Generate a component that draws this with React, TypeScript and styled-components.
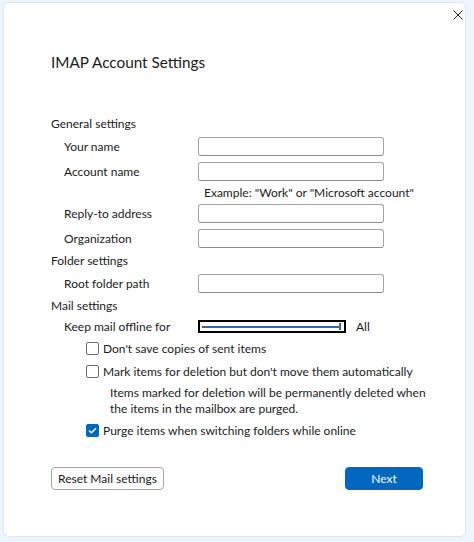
import React from "react";
import styled, { createGlobalStyle } from "styled-components";

const GlobalStyle = createGlobalStyle`
  html, body {
    margin: 0;
    padding: 0;
    background: #edf4fb;
  }
  body {
    font-family: Lato, "Open Sans", sans-serif;
    color: #1b1b1b;
  }
`;

const generalFields = [
  { label: "Your name" },
  { label: "Account name", hint: 'Example: "Work" or "Microsoft account"' },
  { label: "Reply-to address" },
  { label: "Organization" },
];

const App = () => {
  return (
    <>
      <GlobalStyle />
      <StyledWindow>
        <TitleBar>
          <CloseButton aria-label="Close">
            <svg width="10" height="10" viewBox="0 0 10 10">
              <path d="M0.5 0.5 L9.5 9.5 M9.5 0.5 L0.5 9.5" stroke="#1b1b1b" strokeWidth="1" />
            </svg>
          </CloseButton>
        </TitleBar>

        <Body>
          <Title>IMAP Account Settings</Title>

          {/* General settings */}
          <SectionTitle>General settings</SectionTitle>
          {generalFields.map((f) => (
            <React.Fragment key={f.label}>
              <FieldRow>
                <Label>{f.label}</Label>
                <TextInput />
              </FieldRow>
              {f.hint && <Hint>{f.hint}</Hint>}
            </React.Fragment>
          ))}

          {/* Folder settings */}
          <SectionTitle>Folder settings</SectionTitle>
          <FieldRow>
            <Label>Root folder path</Label>
            <TextInput />
          </FieldRow>

          {/* Mail settings */}
          <SectionTitle>Mail settings</SectionTitle>
          <SliderRow>
            <Label>Keep mail offline for</Label>
            <Slider>
              <SliderTrack />
              <SliderThumb />
            </Slider>
            <SliderValue>All</SliderValue>
          </SliderRow>

          <CheckRow>
            <CheckBox />
            <span>Don't save copies of sent items</span>
          </CheckRow>
          <CheckRow>
            <CheckBox />
            <span>Mark items for deletion but don't move them automatically</span>
          </CheckRow>
          <Description>
            Items marked for deletion will be permanently deleted when
            <br />
            the items in the mailbox are purged.
          </Description>
          <CheckRow>
            <CheckBox $checked>
              <svg width="9" height="7" viewBox="0 0 9 7">
                <path d="M1 3.6 L3.4 5.8 L8 1.2" fill="none" stroke="#fff" strokeWidth="1.4" />
              </svg>
            </CheckBox>
            <span>Purge items when switching folders while online</span>
          </CheckRow>

          <Footer>
            <Button>Reset Mail settings</Button>
            <Button $primary>Next</Button>
          </Footer>
        </Body>
      </StyledWindow>
    </>
  );
};

export default App;

const StyledWindow = styled.div`
  margin: 2px 0 0 3px;
  width: 463px;
  height: 535px;
  box-sizing: border-box;
  background: #fff;
  border: 1px solid #dbe6f1;
  border-radius: 6px;
  display: flex;
  flex-direction: column;
`;

const TitleBar = styled.div`
  display: flex;
  justify-content: flex-end;
  padding: 7px 2px 0 0;
`;

const CloseButton = styled.button`
  display: flex;
  padding: 0;
  border: none;
  background: transparent;
`;

const Body = styled.div`
  display: flex;
  flex-direction: column;
  padding: 0 42px 0 47px;
  font-size: 12px;
`;

const Title = styled.h1`
  margin: 30px 0 40px;
  font-size: 15.3px;
  font-weight: 400;
  line-height: 24px;
`;

const SectionTitle = styled.div`
  height: 20px;
  line-height: 20px;
`;

const FieldRow = styled.div`
  display: flex;
  align-items: center;
  height: 25px;
  padding-left: 13px;
`;

const Label = styled.div`
  width: 134px;
  flex-shrink: 0;
`;

const TextInput = styled.input`
  width: 186px;
  height: 19px;
  box-sizing: border-box;
  margin: 0;
  border: 1px solid #a3a3a3;
  border-bottom-color: #8a8a8a;
  border-radius: 3px;
  background: #fff;
`;

const Hint = styled.div`
  height: 17px;
  line-height: 17px;
  padding-left: 153px;
`;

const SliderRow = styled(FieldRow)`
  height: 21px;
`;

const Slider = styled.div`
  position: relative;
  display: flex;
  align-items: center;
  width: 148px;
  height: 13px;
  box-sizing: border-box;
  border: 2px solid #000;
  padding: 0 3px 0 2px;
`;

const SliderTrack = styled.div`
  flex: 1;
  height: 2px;
  background: #2a6db2;
`;

const SliderThumb = styled.div`
  position: absolute;
  right: 3px;
  top: 1px;
  width: 2px;
  height: 7px;
  background: #2a6db2;
`;

const SliderValue = styled.span`
  margin-left: 10px;
`;

const CheckRow = styled.div`
  display: flex;
  align-items: center;
  gap: 4px;
  height: 23px;
  padding-left: 35px;
`;

const CheckBox = styled.span<{ $checked?: boolean }>`
  display: flex;
  align-items: center;
  justify-content: center;
  width: 13px;
  height: 13px;
  box-sizing: border-box;
  border-radius: 2px;
  border: 1px solid ${(p) => (p.$checked ? "#0067c0" : "#6e6e6e")};
  background: ${(p) => (p.$checked ? "#0067c0" : "#fff")};
`;

const Description = styled.div`
  padding: 2px 0 2px 59px;
  line-height: 16px;
  white-space: nowrap;
`;

const Footer = styled.div`
  display: flex;
  justify-content: space-between;
  margin-top: 25px;
`;

const Button = styled.button<{ $primary?: boolean }>`
  height: 23px;
  box-sizing: border-box;
  padding: 0 6px;
  min-width: ${(p) => (p.$primary ? "78px" : "auto")};
  border-radius: 4px;
  font-family: inherit;
  font-size: 12px;
  color: ${(p) => (p.$primary ? "#fff" : "#1b1b1b")};
  background: ${(p) => (p.$primary ? "#0067c0" : "#fdfdfd")};
  border: 1px solid ${(p) => (p.$primary ? "#0067c0" : "#a5a5a5")};
`;
